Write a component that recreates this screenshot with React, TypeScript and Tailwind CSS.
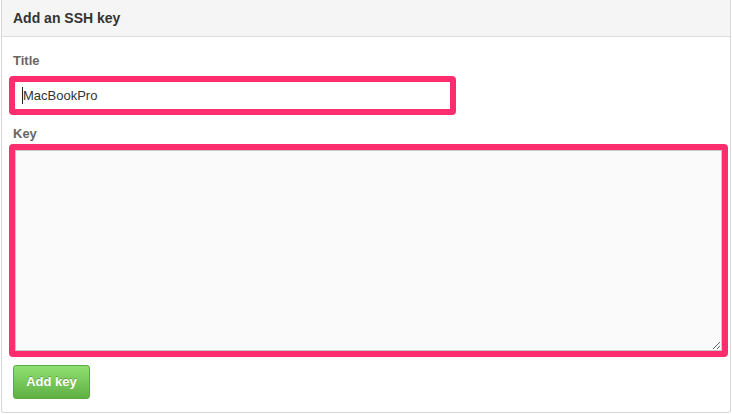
export default function App() {
  return (
    <div className="w-[732px] h-[414px] bg-white pl-px font-['Liberation_Sans',Arial,sans-serif]">
      <div className="w-[730px] h-[413px] border border-t-0 border-[#d8d8d8] rounded-b-[3px] flex flex-col">
        <div className="h-[37px] shrink-0 bg-[#f5f5f5] border-b border-[#dcdcdc] flex items-center pl-[11px]">
          <h3 className="text-[14px] font-bold text-[#333]">Add an SSH key</h3>
        </div>

        <div className="pl-[7px] pt-[16px]">
          <label className="block h-[16px] leading-[16px] pl-[4px] text-[13px] font-bold text-[#666]">
            Title
          </label>
          <div className="mt-[7px] w-[447px] h-[39px] border-[6px] border-[#fe2d6d] rounded-[4px] bg-white flex items-center pl-[7px]">
            <span className="w-px h-[17px] bg-[#222]" />
            <span className="text-[13px] text-[#333] leading-none">MacBookPro</span>
          </div>

          <label className="block mt-[11px] h-[16px] leading-[16px] pl-[4px] text-[13px] font-bold text-[#666]">
            Key
          </label>
          <div className="mt-[2px] w-[719px] h-[213px] border-[6px] border-[#fe2d6d] rounded-[4px] flex">
            <textarea
              className="flex-1 bg-[#fafafa] border border-[#c8c8c8] outline-none resize text-[13px] text-[#333] p-1"
              defaultValue=""
            />
          </div>

          <button className="mt-[8px] ml-[4px] w-[77px] h-[34px] rounded-[3px] border border-[#5ca941] bg-gradient-to-b from-[#8fe070] to-[#60b044] text-white text-[13px] font-bold [text-shadow:0_-1px_0_rgba(0,0,0,0.25)]">
            Add key
          </button>
        </div>
      </div>
    </div>
  );
}
